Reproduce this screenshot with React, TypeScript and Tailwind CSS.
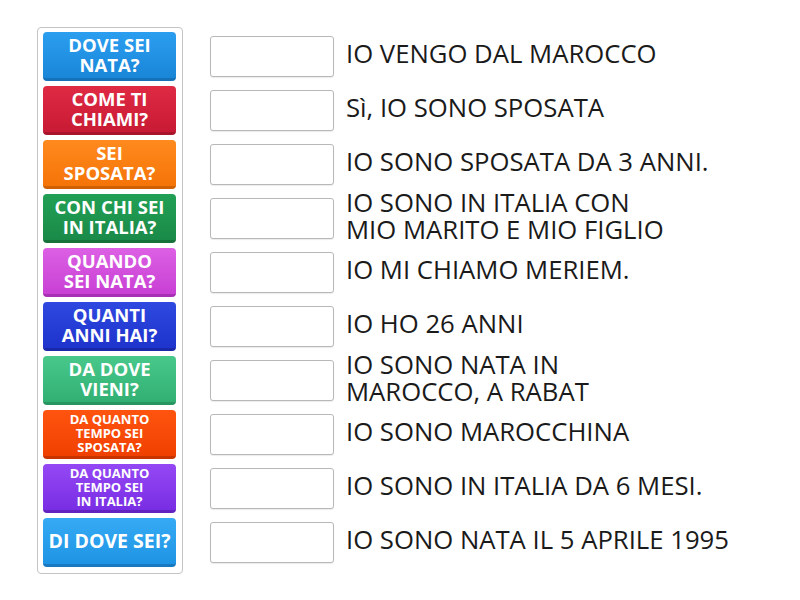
const keys = [
  { label: ["DOVE SEI", "NATA?"], size: "text-[18.5px] leading-[20px]", bg: "bg-[linear-gradient(#2b9ef0,#1a86d8)]", edge: "border-[#1672b8]" },
  { label: ["COME TI", "CHIAMI?"], size: "text-[18.5px] leading-[20px]", bg: "bg-[linear-gradient(#e02a44,#c81a34)]", edge: "border-[#a8142a]" },
  { label: ["SEI", "SPOSATA?"], size: "text-[18.5px] leading-[20px]", bg: "bg-[linear-gradient(#ff8a1e,#f57408)]", edge: "border-[#d06004]" },
  { label: ["CON CHI SEI", "IN ITALIA?"], size: "text-[18.5px] leading-[20px]", bg: "bg-[linear-gradient(#22a055,#1a8a48)]", edge: "border-[#15703a]" },
  { label: ["QUANDO", "SEI NATA?"], size: "text-[18.5px] leading-[20px]", bg: "bg-[linear-gradient(#dc60e4,#c840d4)]", edge: "border-[#a830b4]" },
  { label: ["QUANTI", "ANNI HAI?"], size: "text-[18.5px] leading-[20px]", bg: "bg-[linear-gradient(#2e48e0,#1e34cc)]", edge: "border-[#1828a8]" },
  { label: ["DA DOVE", "VIENI?"], size: "text-[18.5px] leading-[20px]", bg: "bg-[linear-gradient(#48c88a,#32b074)]", edge: "border-[#28945f]" },
  { label: ["DA QUANTO", "TEMPO SEI", "SPOSATA?"], size: "text-[13px] leading-[14px]", bg: "bg-[linear-gradient(#ff5410,#f04000)]", edge: "border-[#c83400]" },
  { label: ["DA QUANTO", "TEMPO SEI", "IN ITALIA?"], size: "text-[13px] leading-[14px]", bg: "bg-[linear-gradient(#9448f4,#7a2ee4)]", edge: "border-[#6222c0]" },
  { label: ["DI DOVE SEI?"], size: "text-[19.5px] leading-[22px]", bg: "bg-[linear-gradient(#36aaf4,#1e94e4)]", edge: "border-[#1878c0]" },
];

const answers = [
  ["IO VENGO DAL MAROCCO"],
  ["Sì, IO SONO SPOSATA"],
  ["IO SONO SPOSATA DA 3 ANNI."],
  ["IO SONO IN ITALIA CON", "MIO MARITO E MIO FIGLIO"],
  ["IO MI CHIAMO MERIEM."],
  ["IO HO 26 ANNI"],
  ["IO SONO NATA IN", "MAROCCO, A RABAT"],
  ["IO SONO MAROCCHINA"],
  ["IO SONO IN ITALIA DA 6 MESI."],
  ["IO SONO NATA IL 5 APRILE 1995"],
];

export default function App() {
  return (
    <div className="w-[800px] h-[600px] bg-white font-['Open_Sans',sans-serif] flex items-start pt-[27px] pl-[37px]">
      <div className="w-[146px] rounded-[4px] border border-[#c4c4c4] pt-[4px] pb-[6px] pl-[5px] pr-[6px] flex flex-col gap-[5px]">
        {keys.map((k, i) => (
          <div
            key={i}
            className={`h-[49px] rounded-[4px] border-b-[3px] ${k.edge} ${k.bg} flex flex-col items-center justify-center text-white font-bold text-center whitespace-nowrap ${k.size}`}
          >
            {k.label.map((l, j) => (
              <span key={j}>{l}</span>
            ))}
          </div>
        ))}
      </div>
      <div className="ml-[27px] pt-[5px] flex flex-col gap-[5px]">
        {answers.map((a, i) => (
          <div key={i} className="h-[49px] flex items-center">
            <div className="w-[124px] h-[41px] rounded-[3px] border border-[#b8b8b8] bg-white shadow-[0_1px_1px_rgba(0,0,0,0.08)]" />
            <div className="ml-[12px] -mt-[6px] text-[25.7px] leading-[27px] text-[#1a1a1a] whitespace-nowrap">
              {a.map((l, j) => (
                <div key={j}>{l}</div>
              ))}
            </div>
          </div>
        ))}
      </div>
    </div>
  );
}
